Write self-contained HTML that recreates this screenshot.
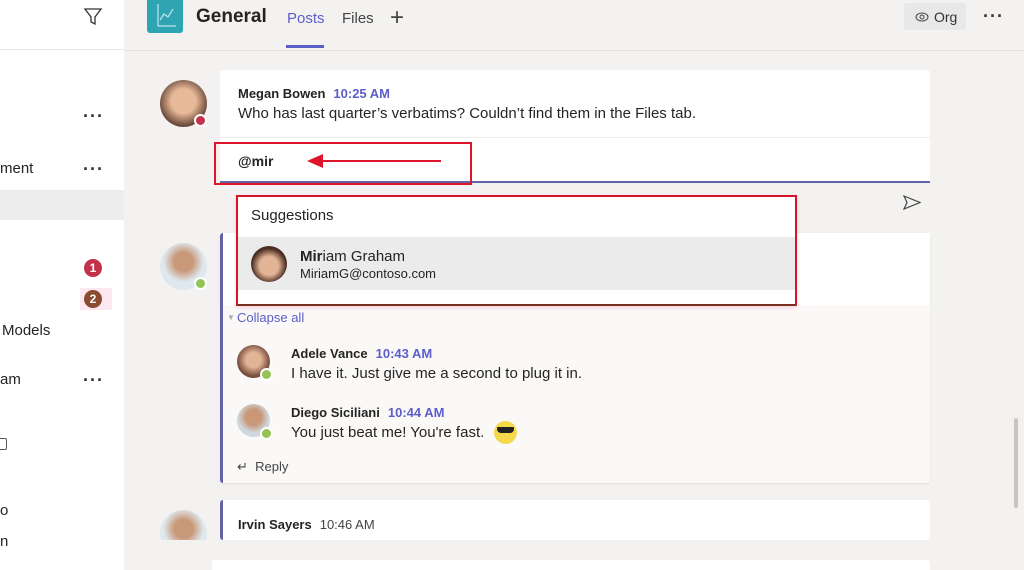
<!DOCTYPE html>
<html><head><meta charset="utf-8"><style>
*{box-sizing:border-box;margin:0;padding:0}
body{width:1024px;height:570px;overflow:hidden;background:#f3f2f1;font-family:"Liberation Sans",sans-serif;color:#252423;position:relative}
.a{position:absolute}
.av{position:absolute;border-radius:50%;overflow:hidden}
.dot{position:absolute;border-radius:50%;border:2px solid #fff}
.more{position:absolute;font-size:18px;letter-spacing:1px;color:#333;font-weight:bold}
.name{font-weight:bold;font-size:13px}
.time{color:#5b5fc7;font-weight:bold;font-size:13px;margin-left:8px}
</style></head><body>
<!-- sidebar -->
<div class="a" style="left:0;top:0;width:124px;height:570px;background:#fff"></div>
<div class="a" style="left:0;top:49px;width:124px;height:1px;background:#e8e8e8"></div>
<svg class="a" style="left:83px;top:7px" width="20" height="20" viewBox="0 0 20 20"><path d="M2 2h16l-6 8v7l-4-2v-5z" fill="none" stroke="#333" stroke-width="1.3"/></svg>
<div class="more" style="left:83px;top:106px">···</div>
<div class="a" style="left:0;top:160px;font-size:15px">ment</div>
<div class="more" style="left:83px;top:159px">···</div>
<div class="a" style="left:0;top:190px;width:124px;height:30px;background:#ededed"></div>
<div class="a" style="left:84px;top:259px;width:18px;height:18px;border-radius:50%;background:#c4314b;color:#fff;font-size:12px;font-weight:bold;text-align:center;line-height:18px">1</div>
<div class="a" style="left:80px;top:288px;width:32px;height:22px;background:#fde7f0"></div>
<div class="a" style="left:84px;top:290px;width:18px;height:18px;border-radius:50%;background:#8a4b30;color:#fff;font-size:12px;font-weight:bold;text-align:center;line-height:18px">2</div>
<div class="a" style="left:2px;top:322px;font-size:15px">Models</div>
<div class="a" style="left:0;top:371px;font-size:15px">am</div>
<div class="more" style="left:83px;top:370px">···</div>
<div class="a" style="left:0;top:438px;width:7px;height:12px;border:1px solid #555;border-left:none;border-radius:0 2px 2px 0"></div>
<div class="a" style="left:0;top:502px;font-size:15px">o</div>
<div class="a" style="left:0;top:533px;font-size:15px">n</div>
<!-- header -->
<div class="a" style="left:124px;top:50px;width:900px;height:1px;background:#e4e2e0"></div>
<div class="a" style="left:147px;top:0;width:36px;height:33px;background:#2fa4b3;border-radius:0 0 3px 3px"></div>
<svg class="a" style="left:155px;top:2px" width="22" height="26"><path d="M3 2v22h18M5 18l4-6 4 3 5-8" fill="none" stroke="#bfe6ea" stroke-width="1.2"/></svg>
<div class="a" style="left:196px;top:6px;font-size:19px;font-weight:bold">General</div>
<div class="a" style="left:287px;top:10px;font-size:15px;color:#5b5fc7">Posts</div>
<div class="a" style="left:286px;top:45px;width:38px;height:3px;background:#5b5fc7"></div>
<div class="a" style="left:342px;top:10px;font-size:15px;color:#444">Files</div>
<div class="a" style="left:390px;top:4px;font-size:24px;color:#444;font-weight:300">+</div>
<div class="a" style="left:904px;top:3px;width:62px;height:27px;background:#e8e8e8;border-radius:3px"></div>
<svg class="a" style="left:915px;top:11px" width="14" height="12"><ellipse cx="7" cy="6" rx="6" ry="4" fill="none" stroke="#444"/><circle cx="7" cy="6" r="2" fill="none" stroke="#444"/></svg>
<div class="a" style="left:934px;top:9px;font-size:14px;color:#333">Org</div>
<div class="more" style="left:983px;top:6px">···</div>
<!-- card 1 -->
<div class="a" style="left:220px;top:70px;width:710px;height:113px;background:#fff;border-radius:3px"></div>
<div class="a" style="left:220px;top:137px;width:710px;height:1px;background:#ececec"></div>
<div class="a" style="left:220px;top:181px;width:710px;height:2px;background:#6264a7"></div>
<div class="av" style="left:160px;top:80px;width:47px;height:47px;background:radial-gradient(circle at 50% 45%,#e8b898 35%,#6b4a3a 70%)"></div>
<div class="dot" style="left:194px;top:114px;width:13px;height:13px;background:#c4314b"></div>
<div class="a" style="left:238px;top:85px"><span class="name">Megan Bowen</span><span class="time">10:25 AM</span></div>
<div class="a" style="left:238px;top:105px;font-size:15px">Who has last quarter’s verbatims? Couldn’t find them in the Files tab.</div>
<div class="a" style="left:214px;top:142px;width:258px;height:43px;border:2px solid #e0142a"></div>
<div class="a" style="left:238px;top:153px;font-size:14px;font-weight:bold">@mir</div>
<div class="a" style="left:322px;top:160px;width:119px;height:2px;background:#e0142a"></div>
<div class="a" style="left:307px;top:154px;width:0;height:0;border-top:7px solid transparent;border-bottom:7px solid transparent;border-right:16px solid #e0142a"></div>
<svg class="a" style="left:903px;top:195px" width="18" height="15"><path d="M1 1l16 6.5L1 14l3-6.5z" fill="none" stroke="#444" stroke-width="1.2"/></svg>
<!-- card 2 -->
<div class="a" style="left:220px;top:233px;width:710px;height:250px;background:#faf9f8;border-left:3px solid #6264a7;border-radius:3px;box-shadow:0 1px 2px rgba(0,0,0,.08)"></div>
<div class="a" style="left:223px;top:233px;width:707px;height:72px;background:#fff"></div>
<div class="av" style="left:160px;top:243px;width:47px;height:47px;background:radial-gradient(circle at 50% 40%,#c89878 25%,#dfe8ee 55%)"></div>
<div class="dot" style="left:194px;top:277px;width:13px;height:13px;background:#92c353"></div>
<div class="a" style="left:227px;top:313px;font-size:8px;color:#aaa">▼</div>
<div class="a" style="left:237px;top:310px;font-size:13px;color:#5b5fc7">Collapse all</div>
<div class="av" style="left:237px;top:345px;width:33px;height:33px;background:radial-gradient(circle at 50% 45%,#e2b496 30%,#7a5040 65%)"></div>
<div class="dot" style="left:260px;top:368px;width:13px;height:13px;background:#92c353"></div>
<div class="a" style="left:291px;top:345px"><span class="name">Adele Vance</span><span class="time">10:43 AM</span></div>
<div class="a" style="left:291px;top:365px;font-size:15px">I have it. Just give me a second to plug it in.</div>
<div class="av" style="left:237px;top:404px;width:33px;height:33px;background:radial-gradient(circle at 50% 40%,#c89878 30%,#cfd8de 60%)"></div>
<div class="dot" style="left:260px;top:427px;width:13px;height:13px;background:#92c353"></div>
<div class="a" style="left:291px;top:404px"><span class="name">Diego Siciliani</span><span class="time">10:44 AM</span></div>
<div class="a" style="left:291px;top:424px;font-size:15px">You just beat me! You're fast.</div>
<div class="a" style="left:494px;top:421px;width:23px;height:23px;border-radius:50%;background:#f5d94a"></div>
<div class="a" style="left:497px;top:427px;width:17px;height:6px;background:#222;border-radius:1px 1px 4px 4px"></div>
<div class="a" style="left:237px;top:459px;font-size:13px;color:#444">↵ &nbsp;Reply</div>
<!-- suggestions -->
<div class="a" style="left:236px;top:195px;width:561px;height:111px;background:#fff;border:2px solid #d8142a;border-bottom-color:#7a3020;box-shadow:0 2px 4px rgba(230,0,100,.15)"></div>
<div class="a" style="left:251px;top:207px;font-size:15px">Suggestions</div>
<div class="a" style="left:238px;top:237px;width:557px;height:53px;background:#ebebeb"></div>
<div class="av" style="left:251px;top:246px;width:36px;height:36px;background:radial-gradient(circle at 50% 55%,#e2b496 35%,#4a2e22 65%)"></div>
<div class="a" style="left:300px;top:248px;font-size:15px"><b>Mir</b>iam Graham</div>
<div class="a" style="left:300px;top:266px;font-size:13px">MiriamG@contoso.com</div>
<!-- card 3 -->
<div class="a" style="left:220px;top:500px;width:710px;height:40px;background:#fff;border-left:3px solid #6264a7;border-radius:3px"></div>
<div class="av" style="left:160px;top:510px;width:47px;height:47px;background:radial-gradient(circle at 50% 40%,#c89878 25%,#dfe8ee 55%)"></div>
<div class="a" style="left:238px;top:516px"><span class="name">Irvin Sayers</span><span style="font-size:13px;margin-left:8px;color:#444">10:46 AM</span></div>
<div class="a" style="left:124px;top:540px;width:900px;height:30px;background:#f3f2f1"></div>
<div class="a" style="left:212px;top:560px;width:718px;height:10px;background:#fff;border-radius:3px 3px 0 0"></div>
<div class="a" style="left:1014px;top:418px;width:4px;height:90px;background:#c8c6c4;border-radius:2px"></div>
</body></html>
